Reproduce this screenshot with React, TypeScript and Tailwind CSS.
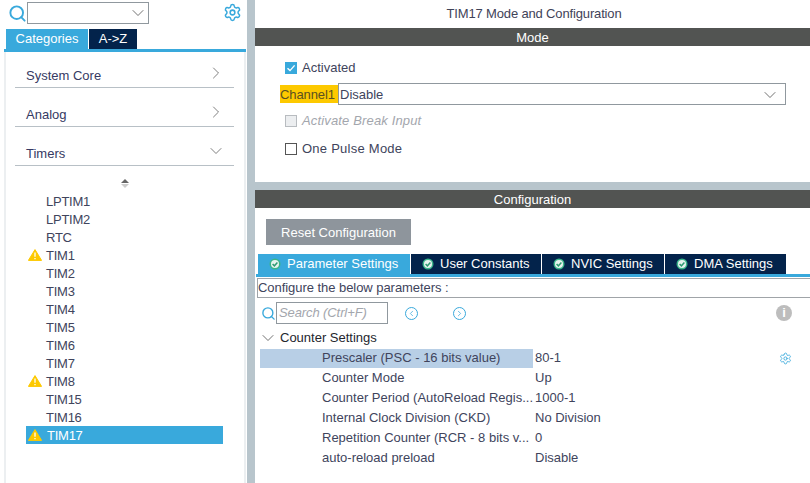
import { ChevronDown, ChevronRight, Search, Settings } from "lucide-react";

const font = "[font-family:'Liberation_Sans',Arial,sans-serif]";

function Warn() {
  return (
    <svg width="14" height="12" viewBox="0 0 14 12" className="shrink-0">
      <path d="M7 .6 13.6 11.4H.4Z" fill="#fdc900" stroke="#fdc900" strokeLinejoin="round" />
      <path d="M7 3.6v4.2M7 9v1.2" stroke="#fff" strokeWidth="1.3" />
    </svg>
  );
}

function Ok() {
  return (
    <svg width="12" height="12" viewBox="0 0 12 12" className="shrink-0">
      <circle cx="6" cy="6" r="5.5" fill="#3bb58a" />
      <circle cx="6" cy="6" r="4" fill="#e7f3ee" />
      <path d="M3.6 6l1.8 1.8 3-3.2" fill="none" stroke="#2e9a72" strokeWidth="1.5" />
    </svg>
  );
}

function Category({ label, open, h }: { label: string; open?: boolean; h: string }) {
  return (
    <div className={`${h} flex items-end justify-between border-b border-[#b8c0c6] pb-[3px] pl-[11px] pr-[8px]`}>
      <span className="text-[13px] leading-[16px] text-[#363a63]">{label}</span>
      {open ? (
        <ChevronDown size={20} strokeWidth={1} className="text-[#666] mb-[1px]" />
      ) : (
        <ChevronRight size={20} strokeWidth={1} className="text-[#666] mb-[1px]" />
      )}
    </div>
  );
}

const timers = [
  { n: "LPTIM1" },
  { n: "LPTIM2" },
  { n: "RTC" },
  { n: "TIM1", w: true },
  { n: "TIM2" },
  { n: "TIM3" },
  { n: "TIM4" },
  { n: "TIM5" },
  { n: "TIM6" },
  { n: "TIM7" },
  { n: "TIM8", w: true },
  { n: "TIM15" },
  { n: "TIM16" },
  { n: "TIM17", w: true, sel: true },
];

const params = [
  ["Prescaler (PSC - 16 bits value)", "80-1"],
  ["Counter Mode", "Up"],
  ["Counter Period (AutoReload Regis...", "1000-1"],
  ["Internal Clock Division (CKD)", "No Division"],
  ["Repetition Counter (RCR - 8 bits v...", "0"],
  ["auto-reload preload", "Disable"],
];

function Tab({ label, active, w }: { label: string; active?: boolean; w: string }) {
  return (
    <div
      className={`${w} h-[20px] flex items-center gap-[6px] pl-[11px] text-[13px] text-white ${
        active ? "bg-[#39a9dc]" : "bg-[#03234b]"
      }`}
    >
      <Ok />
      {label}
    </div>
  );
}

export default function App() {
  return (
    <div className={`w-[810px] h-[483px] overflow-hidden flex bg-white ${font}`}>
      {/* left pane */}
      <div className="w-[247px] shrink-0 flex flex-col">
        <div className="h-[29px] flex items-start pt-[2px] pl-[8px]">
          <Search size={19} strokeWidth={2.4} className="text-[#39a9dc] mt-[2px]" />
          <div className="w-[122px] h-[22px] border border-[#90989e] flex items-center justify-end">
            <ChevronDown size={20} strokeWidth={1} className="text-[#555]" />
          </div>
          <Settings size={19} strokeWidth={1.9} className="text-[#39a9dc] ml-[74px] mt-[1px]" />
        </div>
        <div className="h-[20px] flex pl-[6px] gap-[1px] text-[13px] text-white">
          <div className="w-[82px] bg-[#39a9dc] flex items-center justify-center">Categories</div>
          <div className="w-[48px] bg-[#03234b] flex items-center justify-center">A-&gt;Z</div>
        </div>
        <div className="ml-[4px] mr-[1px] h-[3px] bg-[#39a9dc]" />
        <div className="ml-[4px] mr-[1px] flex-1 border-l-2 border-r-2 border-[#eceff1] pl-[9px] pr-[10px]">
          <Category label="System Core" h="h-[36px]" />
          <Category label="Analog" h="h-[39px]" />
          <Category label="Timers" open h="h-[39px]" />
          <div className="h-[26px] flex flex-col items-center justify-end pb-[4px] gap-[1px]">
            <div className="w-0 h-0 border-x-[4px] border-x-transparent border-b-[4px] border-b-[#666]" />
            <div className="w-0 h-0 border-x-[4px] border-x-transparent border-t-[4px] border-t-[#ccc]" />
          </div>
          <div className="pl-[11px] w-[208px] text-[13px] tracking-[-0.25px]">
            {timers.map((t) => (
              <div
                key={t.n}
                className={`h-[18px] pt-[1px] flex items-center relative pl-[20px] ${
                  t.sel ? "bg-[#39a9dc] text-white pl-[21px]" : "text-[#40445c]"
                }`}
              >
                {t.w && (
                  <span className="absolute left-[2px] top-[3px]">
                    <Warn />
                  </span>
                )}
                {t.n}
              </div>
            ))}
          </div>
        </div>
      </div>

      {/* divider */}
      <div className="w-[8px] shrink-0 bg-[#b8c5cc]" />

      {/* right pane */}
      <div className="flex-1 flex flex-col min-w-0">
        <div className="h-[28px] pl-[3px] flex items-center justify-center text-[13px] tracking-[-0.15px] text-[#3f4358]">
          TIM17 Mode and Configuration
        </div>
        <div className="h-[18px] pt-[1px] bg-[#525452] flex items-center justify-center text-[13px] text-white">Mode</div>

        <div className="h-[136px] flex flex-col text-[13px] text-[#40445c]">
          <label className="flex items-center gap-[5px] pl-[30px] mt-[15px] h-[14px]">
            <span className="w-[12px] h-[12px] bg-[#39a9dc] flex items-center justify-center">
              <svg width="10" height="10" viewBox="0 0 10 10">
                <path d="M1.5 5.2 4 7.6 8.6 2.4" fill="none" stroke="#fff" strokeWidth="1.4" />
              </svg>
            </span>
            Activated
          </label>
          <div className="flex items-center pl-[25px] mt-[8px] h-[22px]">
            <span className="w-[58px] h-[18px] pt-[1px] bg-[#fdc900] flex items-center text-[#5a5020] tracking-[-0.1px]">Channel1</span>
            <div className="w-[448px] h-[22px] pt-[1px] border border-[#90989e] flex items-center justify-between pl-[1px] pr-[5px]">
              Disable
              <ChevronDown size={20} strokeWidth={1} className="text-[#555]" />
            </div>
          </div>
          <label className="flex items-center gap-[5px] pl-[30px] mt-[9px] h-[14px] italic text-[#a3a6ad] tracking-[0.15px]">
            <span className="w-[12px] h-[12px] bg-[#eceef0] border border-[#b8bcc0]" />
            Activate Break Input
          </label>
          <label className="flex items-center gap-[5px] pl-[30px] mt-[14px] h-[14px] tracking-[0.25px]">
            <span className="w-[12px] h-[12px] border border-[#555]" />
            One Pulse Mode
          </label>
        </div>

        <div className="h-[8px] bg-[#b8c5cc]" />
        <div className="h-[18px] pt-[1px] bg-[#525452] flex items-center justify-center text-[13px] text-white">Configuration</div>

        <div className="mt-[11px] ml-[11px] w-[145px] h-[26px] pt-[1px] bg-[#8e959c] flex items-center justify-center text-[13px] text-white">
          Reset Configuration
        </div>

        <div className="mt-[9px] ml-[3px] flex gap-[1px]">
          <Tab label="Parameter Settings" active w="w-[152px]" />
          <Tab label="User Constants" w="w-[130px]" />
          <Tab label="NVIC Settings" w="w-[122px]" />
          <Tab label="DMA Settings" w="w-[121px]" />
        </div>
        <div className="ml-[1px] h-[3px] bg-[#39a9dc]" />
        <div className="ml-[2px] mt-[1px] h-[20px] border border-[#a0a4a8] border-r-0 flex items-center text-[13px] tracking-[-0.05px] text-[#40445c]">
          Configure the below parameters :
        </div>

        <div className="mt-[4px] h-[22px] flex items-center pl-[6px]">
          <Search size={15} strokeWidth={2.2} className="text-[#39a9dc]" />
          <div className="w-[112px] h-[22px] border border-[#90989e] flex items-center pl-[2px] text-[13px] italic text-[#a3a6ad] tracking-[-0.1px]">
            Search (Ctrl+F)
          </div>
          <div className="w-[13px] h-[13px] ml-[17px] rounded-full border-[1.5px] border-[#39a9dc] flex items-center justify-center">
            <ChevronDown size={9} strokeWidth={2} className="text-[#39a9dc] rotate-90" />
          </div>
          <div className="w-[13px] h-[13px] ml-[35px] rounded-full border-[1.5px] border-[#39a9dc] flex items-center justify-center">
            <ChevronDown size={9} strokeWidth={2} className="text-[#39a9dc] -rotate-90" />
          </div>
          <div className="w-[16px] h-[16px] ml-[310px] rounded-full bg-[#bdbdbd] flex items-center justify-center text-[13px] font-bold text-white">
            i
          </div>
        </div>

        <div className="h-[24px] pl-[3px] flex items-center gap-[2px] text-[13px] text-[#24262e] pt-[3px]">
          <ChevronDown size={20} strokeWidth={1} className="text-[#555]" />
          Counter Settings
        </div>

        <div className="text-[13px] text-[#40445c]">
          {params.map(([k, v], i) => (
            <div key={k} className="h-[20px] flex items-center relative">
              <div className={`ml-[5px] w-[273px] h-[19px] pl-[62px] flex items-center whitespace-nowrap ${i === 0 ? "bg-[#b8cfe6]" : ""}`}>
                {k}
              </div>
              <span className="ml-[2px]">{v}</span>
              {i === 0 && (
                <Settings size={13} strokeWidth={1.6} className="absolute left-[524px] top-[4px] text-[#39a9dc]" />
              )}
            </div>
          ))}
        </div>
      </div>
    </div>
  );
}
